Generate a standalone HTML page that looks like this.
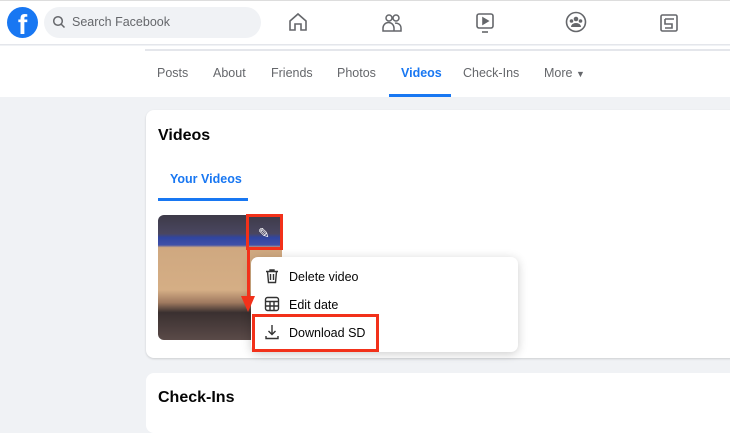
<!DOCTYPE html>
<html><head><style>
*{margin:0;padding:0;box-sizing:border-box}
body{width:730px;height:415px;overflow:hidden;background:#f0f2f5;font-family:"Liberation Sans",sans-serif;position:relative}
.abs{position:absolute}
.tab{position:absolute;top:66px;font-size:12.5px;color:#65676b}
.mi{position:absolute;left:289px;font-size:12.5px;color:#050505}
</style></head><body>
<div class="abs" style="left:0;top:0;width:730px;height:45px;background:#fff;border-top:1px solid #ddd;border-bottom:1px solid #e4e6eb"></div>
<div class="abs" style="left:7px;top:7px;width:31px;height:31px;border-radius:50%;background:#1877f2;color:#fff;font-weight:bold;font-size:28px;text-align:center;line-height:36px;overflow:hidden">f</div>
<div class="abs" style="left:44px;top:7px;width:217px;height:31px;border-radius:16px;background:#f0f2f5"></div>
<svg class="abs" style="left:52px;top:15px" width="14" height="14" viewBox="0 0 14 14"><circle cx="6" cy="6" r="4.3" fill="none" stroke="#65676b" stroke-width="1.5"/><path d="M9 9l3.5 3.5" stroke="#65676b" stroke-width="1.5"/></svg>
<div class="abs" style="left:72px;top:15px;font-size:12.5px;color:#65676b">Search Facebook</div>
<svg class="abs" style="left:287px;top:11px" width="22" height="22" viewBox="0 0 22 22" fill="none" stroke="#65676b" stroke-width="1.6"><path d="M3 10L11 3l8 7v9h-5v-6h-6v6H3z"/></svg>
<svg class="abs" style="left:381px;top:12px" width="22" height="22" viewBox="0 0 22 22" fill="none" stroke="#65676b" stroke-width="1.5"><circle cx="8" cy="6" r="3"/><circle cx="15" cy="6" r="3"/><path d="M2 19v-3a5 5 0 0 1 11 0v3zM13 19h7v-3a5 5 0 0 0-6-4.8"/></svg>
<svg class="abs" style="left:474px;top:11px" width="22" height="22" viewBox="0 0 22 22" fill="none" stroke="#65676b" stroke-width="1.6"><rect x="3" y="3" width="16" height="14" rx="2"/><path d="M8 21h6"/><path d="M9 7l5 3-5 3z" fill="#65676b"/></svg>
<svg class="abs" style="left:565px;top:11px" width="22" height="22" viewBox="0 0 22 22"><circle cx="11" cy="11" r="9.5" fill="none" stroke="#65676b" stroke-width="1.6"/><circle cx="11" cy="8" r="2.3" fill="#65676b"/><circle cx="6.5" cy="10" r="1.8" fill="#65676b"/><circle cx="15.5" cy="10" r="1.8" fill="#65676b"/><path d="M6 16a5 4 0 0 1 10 0z" fill="#65676b"/></svg>
<svg class="abs" style="left:658px;top:12px" width="22" height="22" viewBox="0 0 22 22" fill="none" stroke="#65676b" stroke-width="1.6"><rect x="3" y="3" width="16" height="16" rx="1.5"/><path d="M7 7h9M7 7v5h7v4H7"/></svg>
<div class="abs" style="left:0;top:46px;width:730px;height:51px;background:#fff"></div>
<div class="abs" style="left:145px;top:49px;width:585px;height:2px;background:#e4e6eb"></div>
<div class="tab" style="left:157px">Posts</div>
<div class="tab" style="left:213px">About</div>
<div class="tab" style="left:271px">Friends</div>
<div class="tab" style="left:337px">Photos</div>
<div class="tab" style="left:401px;color:#1877f2;font-weight:bold">Videos</div>
<div class="abs" style="left:389px;top:94px;width:62px;height:3px;background:#1877f2"></div>
<div class="tab" style="left:463px">Check-Ins</div>
<div class="tab" style="left:544px">More <span style="font-size:9px">▼</span></div>
<div class="abs" style="left:146px;top:110px;width:600px;height:248px;background:#fff;border-radius:8px;box-shadow:0 1px 2px rgba(0,0,0,.15)"></div>
<div class="abs" style="left:158px;top:127px;font-size:16px;font-weight:bold;color:#050505">Videos</div>
<div class="abs" style="left:170px;top:172px;font-size:12.5px;color:#1877f2;font-weight:bold">Your Videos</div>
<div class="abs" style="left:158px;top:198px;width:90px;height:3px;background:#1877f2"></div>
<div class="abs" style="left:158px;top:215px;width:124px;height:125px;border-radius:6px;overflow:hidden;background:linear-gradient(#3d3a48 0,#4a4660 15%,#3045a0 18%,#3f50a8 24%,#cfa880 26%,#d5ae85 60%,#a07a60 70%,#3a3030 78%,#5a4a48 100%)"></div>
<div class="abs" style="left:246px;top:214px;width:37px;height:36px;border:3px solid #f2311a"></div>
<div class="abs" style="left:258px;top:225px;color:#fff;font-size:14px">✎</div>
<div class="abs" style="left:251px;top:257px;width:267px;height:95px;background:#fff;border-radius:7px;box-shadow:0 2px 10px rgba(0,0,0,.2)"></div>
<svg class="abs" style="left:264px;top:268px" width="16" height="16" viewBox="0 0 16 16" fill="none" stroke="#333" stroke-width="1.4"><path d="M2 3.5h12M6 3.5V2h4v1.5M3.5 3.5l1 11h7l1-11M6.5 6v6M9.5 6v6"/></svg>
<div class="mi" style="top:270px">Delete video</div>
<svg class="abs" style="left:264px;top:296px" width="16" height="16" viewBox="0 0 16 16" fill="none" stroke="#333" stroke-width="1.4"><rect x="1.5" y="1.5" width="13" height="13" rx="2"/><path d="M1.5 5.5h13M1.5 10h13M6 5.5v9M10 5.5v9"/></svg>
<div class="mi" style="top:298px">Edit date</div>
<svg class="abs" style="left:264px;top:324px" width="16" height="16" viewBox="0 0 16 16" fill="none" stroke="#333" stroke-width="1.4"><path d="M8 1v9M4.5 7L8 10.5 11.5 7M2 12v2.5h12V12"/></svg>
<div class="mi" style="top:326px">Download SD</div>
<div class="abs" style="left:252px;top:314px;width:127px;height:38px;border:3px solid #f2311a"></div>
<div class="abs" style="left:247px;top:248px;width:3px;height:50px;background:#f2311a"></div>
<div class="abs" style="left:241px;top:296px;width:0;height:0;border-left:7.5px solid transparent;border-right:7.5px solid transparent;border-top:16px solid #f2311a"></div>
<div class="abs" style="left:146px;top:373px;width:600px;height:60px;background:#fff;border-radius:8px"></div>
<div class="abs" style="left:158px;top:389px;font-size:16px;font-weight:bold;color:#050505">Check-Ins</div>
</body></html>
